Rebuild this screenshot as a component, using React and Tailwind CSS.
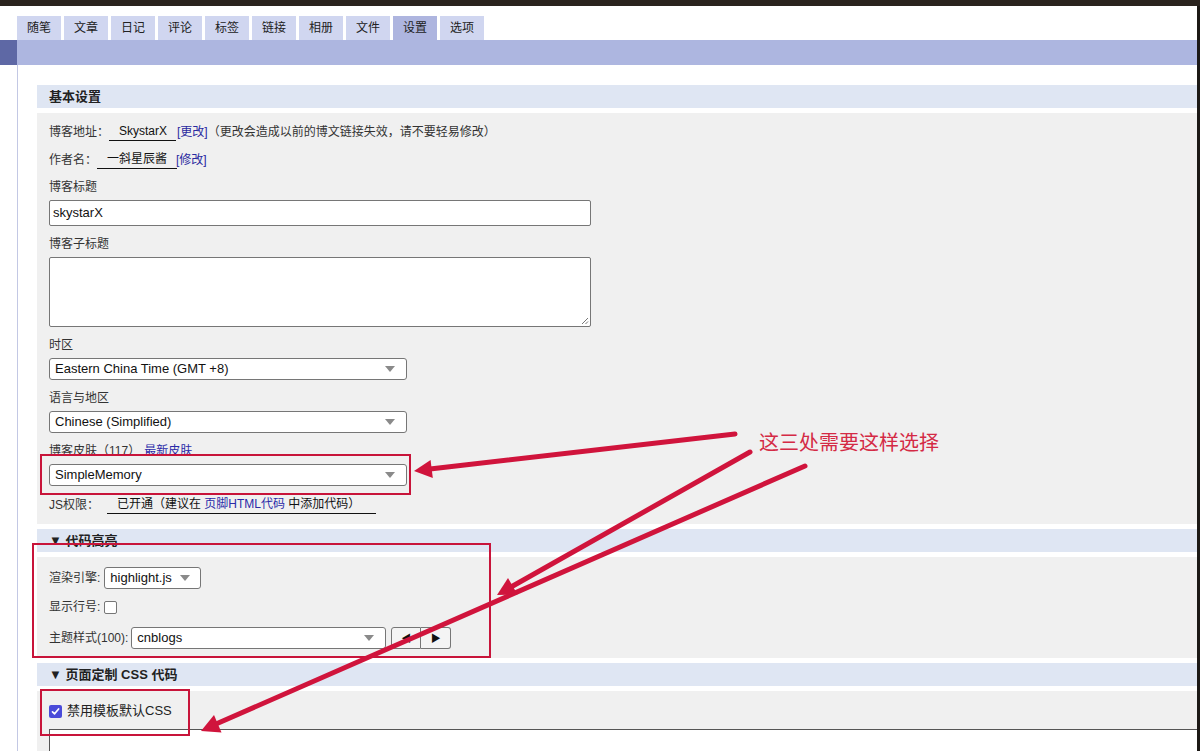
import React from "react";

const TABS = ["随笔", "文章", "日记", "评论", "标签", "链接", "相册", "文件", "设置", "选项"];

const FONT = { fontFamily: '"Liberation Sans", "Noto Sans CJK SC", sans-serif' };

function Arrow({ className = "" }) {
  return (
    <svg width="10" height="6" viewBox="0 0 10 6" className={className}>
      <path d="M0 0 L10 0 L5 6 Z" fill="#8a8a8a" />
    </svg>
  );
}

function Select({ value, className = "" }) {
  return (
    <div
      className={`flex h-[22px] shrink-0 items-center justify-between rounded-[3px] border border-[#767676] bg-white pl-[5px] pr-[11px] text-[13px] text-[#111] ${className}`}
    >
      <span>{value}</span>
      <Arrow />
    </div>
  );
}

function SectionHead({ children }) {
  return (
    <div className="flex h-[23px] items-center bg-[#dfe6f3] pl-[12px] text-[13px] font-bold text-[#222]">
      {children}
    </div>
  );
}

function Label({ children }) {
  return <div className="mt-[9px] mb-[4px] h-[18px] leading-[18px]">{children}</div>;
}

export default function App() {
  return (
    <div className="relative h-[751px] w-full overflow-hidden bg-white text-[12px] text-[#333]" style={FONT}>
      <div className="h-[6px] bg-[#2a231e]" />
      <div className="flex">
        <div className="flex flex-1 flex-col">
          {/* tabs */}
          <div className="flex shrink-0 gap-[3px] pl-[17px] pt-[10px]">
            {TABS.map((t) => (
              <div
                key={t}
                className={
                  t === "设置"
                    ? "flex h-[24px] w-[44px] items-center justify-center bg-[#aeb5df] text-[12px] text-[#222]"
                    : "flex h-[24px] w-[44px] items-center justify-center bg-[#d0d6f0] text-[12px] text-[#222]"
                }
              >
                {t}
              </div>
            ))}
          </div>
          <div className="flex h-[25px] shrink-0">
            <div className="w-[17px] bg-[#5e68a5]" />
            <div className="flex-1 bg-[#adb6e0]" />
          </div>

          <div className="flex">
            <div className="w-[17px]" />
            <div className="flex-1 border-l border-[#c3c8e4] pl-[19px] pt-[20px]">
              {/* basic */}
              <SectionHead>基本设置</SectionHead>
              <div className="mt-[5px] bg-[#f0f0f0] pl-[12px] pb-[10px] pt-[9px]">
                <div className="flex h-[19px] items-center">
                  <span>博客地址：</span>
                  <span className="flex h-[19px] items-center border-b border-[#111] pl-[10px] pr-[9px] text-[#111]">SkystarX</span>
                  <span className="ml-[1px] text-[#2a2aa0]">[更改]</span>
                  <span>（更改会造成以前的博文链接失效，请不要轻易修改）</span>
                </div>
                <div className="mt-[9px] flex h-[19px] items-center">
                  <span>作者名：</span>
                  <span className="flex h-[19px] items-center border-b border-[#111] pl-[10px] pr-[10px] text-[#111]">一斜星辰酱</span>
                  <span className="ml-[-1px] text-[#2a2aa0]">[修改]</span>
                </div>
                <Label>博客标题</Label>
                <div className="flex h-[26px] w-[542px] items-center rounded-[2px] border border-[#767676] bg-white pl-[3px] text-[13px] text-[#111]">
                  skystarX
                </div>
                <Label>博客子标题</Label>
                <div className="relative h-[70px] w-[542px] rounded-[2px] border border-[#767676] bg-white">
                  <svg width="8" height="8" viewBox="0 0 8 8" className="absolute bottom-[1px] right-[1px]">
                    <path d="M7 1 L1 7 M7 4.5 L4.5 7" stroke="#777" strokeWidth="1" />
                  </svg>
                </div>
                <Label>时区</Label>
                <Select value="Eastern China Time (GMT +8)" className="w-[358px]" />
                <Label>语言与地区</Label>
                <Select value="Chinese (Simplified)" className="w-[358px]" />
                <Label>
                  博客皮肤（117）<span className="ml-[4px] text-[#2a2aa8]">最新皮肤</span>
                </Label>
                <Select value="SimpleMemory" className="w-[358px]" />
                <div className="mt-[9px] flex h-[19px] items-center">
                  <span>JS权限：</span>
                  <span className="ml-[8px] inline-block h-[19px] whitespace-nowrap border-b border-[#111] pl-[10px] pr-[16px] leading-[19px] text-[#111]">
                    已开通（建议在 <span className="text-[#2a2aa8]">页脚HTML代码</span> 中添加代码）
                  </span>
                </div>
              </div>

              {/* code highlight */}
              <div className="mt-[5px]">
                <SectionHead>▼ 代码高亮</SectionHead>
              </div>
              <div className="mt-[5px] bg-[#f0f0f0] pl-[12px] pb-[9px] pt-[10px]">
                <div className="flex h-[22px] items-center">
                  <span className="mr-[4px]">渲染引擎:</span>
                  <div className="flex h-[22px] w-[97px] items-center justify-between rounded-[3px] border border-[#767676] bg-white pl-[5px] pr-[10px] text-[13px] text-[#111]">
                    <span>highlight.js</span>
                    <Arrow />
                  </div>
                </div>
                <div className="mt-[9px] flex h-[18px] items-center">
                  <span className="mr-[4px]">显示行号:</span>
                  <span className="h-[13px] w-[13px] rounded-[2px] border border-[#767676] bg-white" />
                </div>
                <div className="mt-[11px] flex h-[22px] items-center">
                  <span className="mr-[3px]">主题样式(100):</span>
                  <Select value="cnblogs" className="w-[255px]" />
                  <div className="ml-[5px] flex h-[22px]">
                    <div className="flex w-[30px] items-center justify-center rounded-l-[3px] border border-[#767676] bg-[#f4f4f4] text-[10px] text-[#111]">◀</div>
                    <div className="flex w-[30px] items-center justify-center rounded-r-[3px] border border-l-0 border-[#767676] bg-[#f4f4f4] text-[10px] text-[#111]">▶</div>
                  </div>
                </div>
              </div>

              {/* css */}
              <div className="mt-[5px]">
                <SectionHead>▼ 页面定制 CSS 代码</SectionHead>
              </div>
              <div className="mt-[5px] bg-[#f0f0f0] pl-[12px] pt-[11px]">
                <div className="flex h-[18px] items-center">
                  <span className="flex h-[13px] w-[13px] items-center justify-center rounded-[2px] bg-[#4a4bd9]">
                    <svg width="9" height="9" viewBox="0 0 9 9">
                      <path d="M1.5 4.8 L3.6 6.8 L7.6 2" stroke="white" strokeWidth="1.7" fill="none" strokeLinecap="round" strokeLinejoin="round" />
                    </svg>
                  </span>
                  <span className="ml-[5px] text-[13px] text-[#222]">禁用模板默认CSS</span>
                </div>
                <div className="mt-[9px] h-[60px] border-l border-t border-[#555] bg-white" />
              </div>
            </div>
          </div>
        </div>
        <div className="w-[3px] shrink-0 bg-[#1c1916]" />
      </div>

      {/* annotations */}
      <svg className="pointer-events-none absolute left-0 top-0" width="1200" height="751" viewBox="0 0 1200 751">
        <g fill="none" stroke="#c8143a" strokeWidth="2">
          <rect x="41" y="455" width="369" height="39" />
          <rect x="33" y="544" width="457" height="113" />
          <rect x="41" y="690" width="148" height="45" />
        </g>
        <g stroke="#d0143c" strokeWidth="5" strokeLinecap="round">
          <line x1="735" y1="434" x2="430" y2="469" />
          <line x1="750" y1="452" x2="511" y2="587" />
          <line x1="805" y1="466" x2="216" y2="724" />
        </g>
        <g fill="#d0143c">
          <polygon points="414,471 430.6,460 432.8,478" />
          <polygon points="497,595 508,578 517.5,594.5" />
          <polygon points="201,731 214,715 221.5,732.5" />
        </g>
      </svg>
      <span className="absolute left-[759px] top-[428px] text-[20px] text-[#d42a45]">这三处需要这样选择</span>
    </div>
  );
}
